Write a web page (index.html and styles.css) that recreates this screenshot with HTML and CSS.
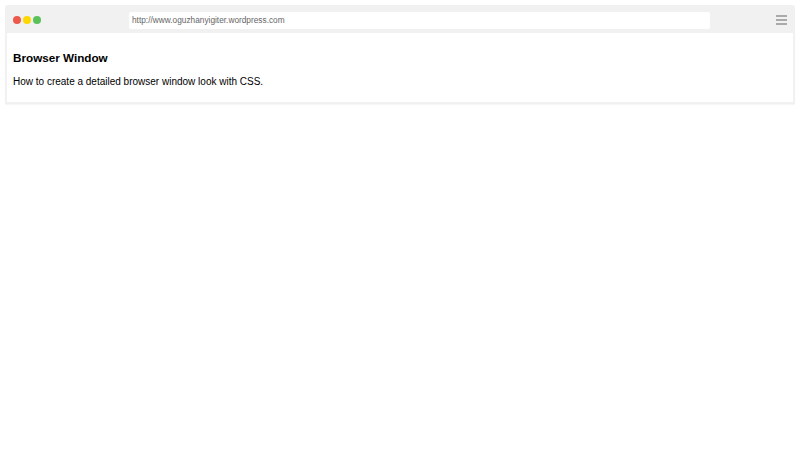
FILE: index.html
```html
<!DOCTYPE html>
<html>
<head>
<meta charset="utf-8">
<link rel="stylesheet" href="styles.css">
</head>
<body>
<div class="container">
  <div class="top">
    <div class="left">
      <span class="dot red"></span>
      <span class="dot yellow"></span>
      <span class="dot green"></span>
    </div>
    <div class="middle">
      <input class="url" type="text" value="http://www.oguzhanyigiter.wordpress.com">
    </div>
    <div class="right">
      <span class="bar"></span>
      <span class="bar"></span>
      <span class="bar"></span>
    </div>
  </div>
  <div class="content">
    <h3 class="title">Browser Window</h3>
    <p class="text">How to create a detailed browser window look with CSS.</p>
  </div>
</div>
</body>
</html>
```
FILE: styles.css
```css
html, body {
  margin: 0;
  padding: 0;
  background: #fff;
}
body {
  padding: 5px;
  font-family: "Liberation Sans", Arial, sans-serif;
}
.container {
  border: 2px solid #f1f1f1;
  border-top-left-radius: 3px;
  border-top-right-radius: 3px;
  box-shadow: 0 1px 1px rgba(0,0,0,0.04);
}
.top {
  display: flex;
  align-items: center;
  height: 26px;
  background: #f1f1f1;
  padding: 0 6px 0 6px;
}
.left {
  width: 116px;
  display: flex;
  gap: 2px;
}
.dot {
  width: 8px;
  height: 8px;
  border-radius: 50%;
  display: inline-block;
}
.red { background: #ed594a; }
.yellow { background: #fdd800; }
.green { background: #5ac05a; }
.middle {
  flex: 1;
  display: flex;
}
.url {
  width: 100%;
  height: 17px;
  box-sizing: border-box;
  border: none;
  border-radius: 2px;
  background: #fff;
  color: #666;
  padding: 0 3px 1px 3px;
  font-family: "Liberation Sans", Arial, sans-serif;
  font-size: 8.3px;
  outline: none;
}
.right {
  width: 77px;
  display: flex;
  flex-direction: column;
  align-items: flex-end;
  gap: 2px;
}
.bar {
  display: block;
  width: 11px;
  height: 2px;
  background: #aaa;
}
.content {
  padding: 7px 6px 15px 6px;
}
.title {
  margin: 11px 0 0 0;
  font-size: 11.7px;
  font-weight: bold;
  color: #000;
}
.text {
  margin: 12px 0 0 0;
  font-size: 10px;
  color: #000;
}
```
